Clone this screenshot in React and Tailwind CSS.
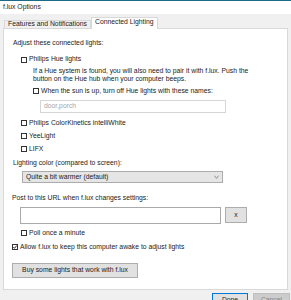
import React from "react";

const Box = ({ checked }) => (
  <span className="w-[6px] h-[6px] border border-[#333333] bg-white flex items-center justify-center shrink-0">
    {checked && (
      <svg viewBox="0 0 4 4" className="w-[4px] h-[4px]">
        <path d="M0.3 2 L1.5 3.3 L3.8 0.5" fill="none" stroke="#111" strokeWidth="0.9" />
      </svg>
    )}
  </span>
);

const Check = ({ label, checked, className = "" }) => (
  <div className={`flex items-center gap-[2px] h-[10px] ${className}`}>
    <Box checked={checked} />
    <span>{label}</span>
  </div>
);

const App = () => {
  return (
    <div
      className="w-[291px] h-[300px] overflow-hidden bg-[#f0f0f0] text-[#222222] text-[6.8px] leading-[8.5px] flex flex-col"
      style={{ fontFamily: '"Liberation Sans", Arial, sans-serif' }}
    >
      {/* title bar */}
      <div className="h-[14px] bg-white border-t border-[#1b6a86] flex items-center pl-[3px] shrink-0">
        f.lux Options
      </div>

      {/* tabs */}
      <div className="flex items-end h-[14px] pl-[4px] shrink-0">
        <div className="h-[8px] px-[3px] flex items-center border border-b-0 border-[#d9d9d9] bg-[#f0f0f0]">
          Features and Notifications
        </div>
        <div className="h-[12px] -mb-px px-[3px] pb-[2px] flex items-center border border-b-0 border-[#d9d9d9] bg-white relative z-10">
          Connected Lighting
        </div>
      </div>

      {/* panel */}
      <div className="mx-[3px] h-[262px] border border-[#d9d9d9] bg-white flex flex-col shrink-0">
        <div className="mt-[9px] ml-[9px] h-[10px] flex items-center">Adjust these connected lights:</div>
        <Check className="mt-[6px] ml-[17px] h-[11px]" label="Philips Hue lights" />
        <div className="mt-[1.5px] ml-[29px]">
          If a Hue system is found, you will also need to pair it with f.lux. Push the
          <br />
          button on the Hue hub when your computer beeps.
        </div>
        <Check className="mt-[2.5px] ml-[29px]" label="When the sun is up, turn off Hue lights with these names:" />
        <div className="mt-[4px] ml-[36px] w-[186px] h-[13px] border border-[#d6d6d6] flex items-center pl-[3px] text-[#a6a6a6]">
          door,porch
        </div>
        <Check className="mt-[5px] ml-[17px]" label="Philips ColorKinetics intelliWhite" />
        <Check className="mt-[3px] ml-[17px]" label="YeeLight" />
        <Check className="mt-[3px] ml-[17px]" label="LIFX" />
        <div className="mt-[4px] ml-[9px] h-[10px] flex items-center">Lighting color (compared to screen):</div>
        <div className="mt-[3px] ml-[18px] w-[201px] h-[12px] bg-[#e5e5e5] border border-[#acacac] flex items-center justify-between pl-[3px] pr-[3px]">
          <span>Quite a bit warmer (default)</span>
          <svg viewBox="0 0 6 4" className="w-[5px] h-[4px]">
            <path d="M0.5 0.8 L3 3.2 L5.5 0.8" fill="none" stroke="#555" strokeWidth="0.9" />
          </svg>
        </div>
        <div className="mt-[10px] ml-[8px] h-[10px] flex items-center">Post to this URL when f.lux changes settings:</div>
        <div className="mt-[4px] ml-[16px] flex items-start gap-[4px]">
          <div className="w-[201px] h-[17px] border border-[#a9a9a9] bg-white" />
          <div className="w-[22px] h-[16px] border border-[#adadad] bg-[#e1e1e1] flex items-center justify-center">
            x
          </div>
        </div>
        <Check className="mt-[4px] ml-[17px]" label="Poll once a minute" />
        <Check className="mt-[4px] ml-[8px]" checked label="Allow f.lux to keep this computer awake to adjust lights" />
        <div className="mt-[11px] ml-[8px] w-[126px] h-[15px] border border-[#adadad] bg-[#e1e1e1] flex items-center justify-center">
          Buy some lights that work with f.lux
        </div>
      </div>

      {/* dialog buttons */}
      <div className="flex justify-end gap-[5px] pr-[1px] mt-[3px]">
        <div className="w-[36px] h-[14px] border border-[#0078d7] bg-[#e1e1e1] flex items-center justify-center">
          Done
        </div>
        <div className="w-[37px] h-[14px] border border-[#bfbfbf] bg-[#cccccc] text-[#838383] flex items-center justify-center">
          Cancel
        </div>
      </div>
    </div>
  );
};

export default App;
